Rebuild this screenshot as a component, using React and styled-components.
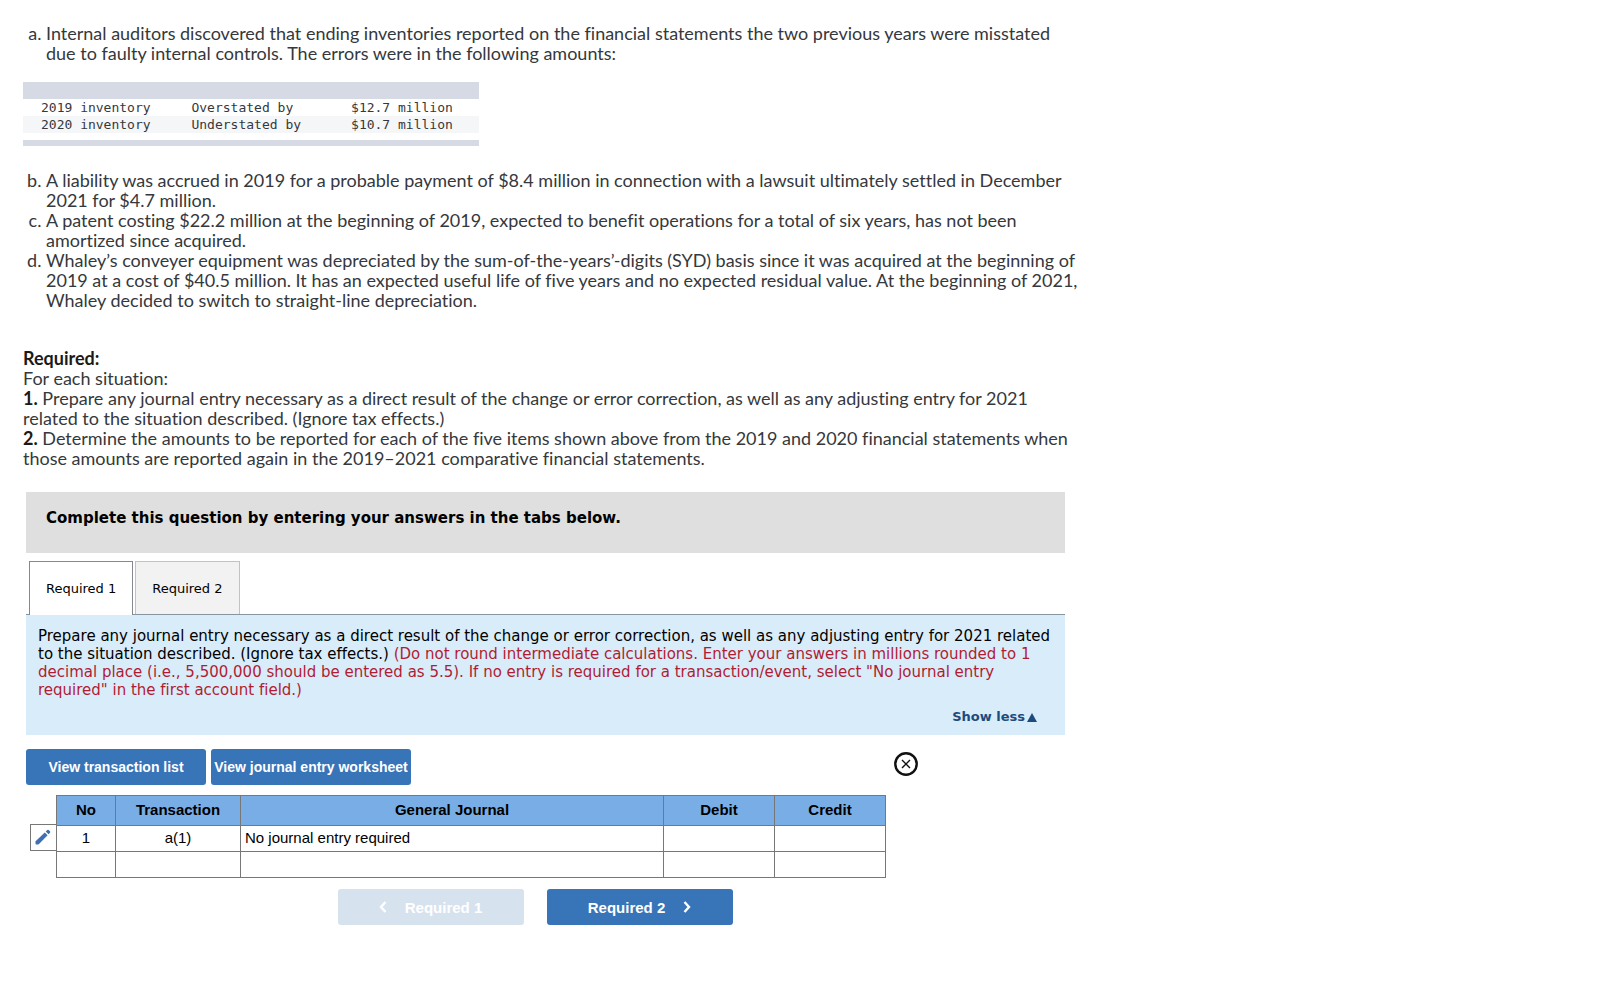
import React from 'react';
import styled, { createGlobalStyle } from 'styled-components';

const GlobalStyle = createGlobalStyle`
    body {
        margin: 0;
        background: white;
        color: #35383c;
        font-family: Lato, sans-serif;
        font-size: 18px;
        font-variant-ligatures: none;
        line-height: 20px;
    }
`

const StyledPage = styled.main`
    max-width: 1060px;
    padding: 23px;
`

const StyledList = styled.ol`
    list-style-type: lower-alpha;
    margin: 0;
    padding-left: 23px;
`

const StyledInventory = styled.table`
    width: 100%;
    max-width: 456px;
    margin: 19px 0 24px;
    border-collapse: collapse;
    border-top: 17px solid #d6dae4;
    border-bottom: 6px solid #d6dae4;
    font-family: 'DejaVu Sans Mono', monospace;
    font-size: 13px;
    line-height: 17px;

    td {
        width: 33%;
        padding: 0 0 0 18px;
        white-space: nowrap;
    }

    td:nth-child(2) {
        width: 35%;
    }

    tr:nth-child(2) {
        background: #f5f6f7;
    }

    tr:last-child td {
        height: 7px;
    }
`

const StyledRequired = styled.section`
    margin: 38px 0 24px;

    p {
        margin: 0;
    }

    b {
        color: #1a1a1a;
    }
`

const StyledQuestion = styled.section`
    max-width: 1039px;
    margin-left: 3px;
    color: black;
    font-family: 'DejaVu Sans', sans-serif;
    font-size: 15px;
    line-height: 18px;
`

const StyledBanner = styled.div`
    padding: 17px 20px 26px;
    background: #dfdfdf;
    font-weight: bold;
`

const StyledTabs = styled.div`
    display: flex;
    gap: 2px;
    margin-top: 8px;
    padding: 0 3px;
    border-bottom: 1px solid #8795a1;
`

const StyledTab = styled.button`
    height: ${props => props.$active ? '54px' : '53px'};
    margin-bottom: ${props => props.$active ? '-1px' : '0'};
    padding: 0 16px;
    border: 1px solid ${props => props.$active ? '#85898f' : '#c2c2c2'};
    border-bottom: 0;
    background: ${props => props.$active ? 'white' : '#f2f2f2'};
    color: black;
    font-family: inherit;
    font-size: 13px;
`

const StyledInstructions = styled.div`
    display: flex;
    flex-direction: column;
    padding: 12px 12px 10px;
    background: #d9ecf9;

    p {
        margin: 0;
    }
`

const StyledNote = styled.span`
    color: #b01c33;
`

const StyledShowLess = styled.button`
    display: flex;
    align-items: center;
    align-self: flex-end;
    gap: 2px;
    height: 18px;
    margin: 8px 16px 0 0;
    padding: 0;
    border: 0;
    background: none;
    color: #1d4b7c;
    font-family: inherit;
    font-size: 13px;
    font-weight: bold;
`

const StyledJournal = styled.div`
    max-width: 892px;
    margin-top: 14px;
    font-family: 'Liberation Sans', sans-serif;
`

const StyledToolbar = styled.div`
    display: flex;
    gap: 5px;
    margin-bottom: 10px;
`

const StyledButton = styled.button`
    display: flex;
    align-items: center;
    justify-content: center;
    gap: 18px;
    width: ${props => props.$width};
    height: 36px;
    padding: 0;
    border: 0;
    border-radius: 3px;
    background: #3874b8;
    color: white;
    font-family: 'Liberation Sans', sans-serif;
    font-size: ${props => props.$large ? '15px' : '14px'};
    font-weight: bold;

    &:disabled {
        background: #d7e2ef;
    }
`

const StyledClose = styled.button`
    display: flex;
    align-self: flex-start;
    margin: 3px 0 0 auto;
    padding: 0;
    border: 0;
    background: none;
`

const StyledSheet = styled.div`
    display: flex;
    align-items: flex-start;
    padding-left: 4px;
`

const StyledEdit = styled.button`
    display: flex;
    align-items: center;
    justify-content: center;
    width: 26px;
    height: 27px;
    margin-top: 29px;
    padding: 0 2px 2px 0;
    border: 1px solid #777;
    border-right: 0;
    background: white;
`

const StyledTable = styled.table`
    width: 100%;
    max-width: 830px;
    table-layout: fixed;
    border-collapse: collapse;
    text-align: center;

    th, td {
        height: 23px;
        padding: 0 4px 2px;
        border: 1px solid #777;
    }

    th {
        height: 27px;
        background: #79ade6;
    }

    td:nth-child(3) {
        text-align: left;
    }
`

const StyledColumn = styled.col`
    width: ${props => props.$width};
`

const StyledNav = styled.nav`
    display: flex;
    justify-content: center;
    gap: 23px;
    margin-top: 11px;
    padding-right: 21px;
`

const Chevron = ({ d }) => (
    <svg width='8' height='12' viewBox='0 0 8 12' fill='none' stroke='currentColor' strokeWidth='2.4' aria-hidden='true'>
        <path d={d} />
    </svg>
)

const inventories = [
    ['2019 inventory', 'Overstated by', '$12.7 million'],
    ['2020 inventory', 'Understated by', '$10.7 million']
];

const columns = [
    { name: 'No', width: '59px' },
    { name: 'Transaction', width: '125px' },
    { name: 'General Journal', width: 'auto' },
    { name: 'Debit', width: '111px' },
    { name: 'Credit', width: '111px' }
];

const entries = [
    ['1', 'a(1)', 'No journal entry required', '', ''],
    ['', '', '', '', '']
];

const tabs = ['Required 1', 'Required 2'];

class App extends React.Component{
    state = {
        tab: 'Required 1'
    }

    selectTab = (e) => {
        this.setState({tab: e.currentTarget.name});
    }

    render(){
        return(
            <StyledPage>
                <GlobalStyle />
                <StyledList>
                    <li>
                        Internal auditors discovered that ending inventories reported on the financial statements the two previous years were misstated<br />
                        due to faulty internal controls. The errors were in the following amounts:
                    </li>
                </StyledList>
                <StyledInventory>
                    <tbody>
                        {inventories.map(row => (
                            <tr key={row[0]}>
                                {row.map(cell => <td key={cell}>{cell}</td>)}
                            </tr>
                        ))}
                        <tr><td colSpan='3'></td></tr>
                    </tbody>
                </StyledInventory>
                <StyledList start='2'>
                    <li>
                        A liability was accrued in 2019 for a probable payment of $8.4 million in connection with a lawsuit ultimately settled in December<br />
                        2021 for $4.7 million.
                    </li>
                    <li>
                        A patent costing $22.2 million at the beginning of 2019, expected to benefit operations for a total of six years, has not been<br />
                        amortized since acquired.
                    </li>
                    <li>
                        Whaley’s conveyer equipment was depreciated by the sum-of-the-years’-digits (SYD) basis since it was acquired at the beginning of<br />
                        2019 at a cost of $40.5 million. It has an expected useful life of five years and no expected residual value. At the beginning of 2021,<br />
                        Whaley decided to switch to straight-line depreciation.
                    </li>
                </StyledList>
                <StyledRequired>
                    <p><b>Required:</b></p>
                    <p>For each situation:</p>
                    <p>
                        <b>1.</b> Prepare any journal entry necessary as a direct result of the change or error correction, as well as any adjusting entry for 2021<br />
                        related to the situation described. (Ignore tax effects.)
                    </p>
                    <p>
                        <b>2.</b> Determine the amounts to be reported for each of the five items shown above from the 2019 and 2020 financial statements when<br />
                        those amounts are reported again in the 2019–2021 comparative financial statements.
                    </p>
                </StyledRequired>
                <StyledQuestion>
                    <StyledBanner>Complete this question by entering your answers in the tabs below.</StyledBanner>
                    <StyledTabs role='tablist'>
                        {tabs.map(tab => (
                            <StyledTab key={tab} type='button' role='tab' name={tab} aria-selected={tab === this.state.tab} $active={tab === this.state.tab} onClick={this.selectTab}>{tab}</StyledTab>
                        ))}
                    </StyledTabs>
                    <StyledInstructions>
                        <p>
                            Prepare any journal entry necessary as a direct result of the change or error correction, as well as any adjusting entry for 2021 related<br />
                            to the situation described. (Ignore tax effects.) <StyledNote>(Do not round intermediate calculations. Enter your answers in millions rounded to 1<br />
                            decimal place (i.e., 5,500,000 should be entered as 5.5). If no entry is required for a transaction/event, select "No journal entry<br />
                            required" in the first account field.)</StyledNote>
                        </p>
                        <StyledShowLess type='button'>
                            Show less
                            <svg width='10' height='12' viewBox='0 0 10 12' fill='currentColor' aria-hidden='true'>
                                <path d='M5 3L10 12H0Z' />
                            </svg>
                        </StyledShowLess>
                    </StyledInstructions>
                    <StyledJournal>
                        <StyledToolbar>
                            <StyledButton type='button' $width='180px'>View transaction list</StyledButton>
                            <StyledButton type='button' $width='200px'>View journal entry worksheet</StyledButton>
                            <StyledClose type='button' aria-label='Close'>
                                <svg width='24' height='24' viewBox='0 0 24 24' fill='none' stroke='#111' aria-hidden='true'>
                                    <circle cx='12' cy='12' r='10.7' strokeWidth='2.4' />
                                    <path d='M8 8L16 16M16 8L8 16' strokeWidth='1.4' />
                                </svg>
                            </StyledClose>
                        </StyledToolbar>
                        <StyledSheet>
                            <StyledEdit type='button' aria-label='Edit entry 1'>
                                <svg width='16' height='16' viewBox='0 0 16 16' fill='#3f6fae' aria-hidden='true'>
                                    <path d='M0.5 14.6V12.6Q0.5 12.2 0.8 11.9L9.8 3.4L12.6 6.2L4 15.1Q3.6 15.5 3.2 15.5H1.4Q0.5 15.5 0.5 14.6Z' />
                                    <path d='M10.7 2.5L12.3 1Q13 0.4 13.7 1L15 2.3Q15.7 3 15 3.7L13.5 5.3Z' />
                                </svg>
                            </StyledEdit>
                            <StyledTable>
                                <colgroup>
                                    {columns.map(column => <StyledColumn key={column.name} $width={column.width} />)}
                                </colgroup>
                                <thead>
                                    <tr>
                                        {columns.map(column => <th key={column.name} scope='col'>{column.name}</th>)}
                                    </tr>
                                </thead>
                                <tbody>
                                    {entries.map((entry, i) => (
                                        <tr key={i}>
                                            {entry.map((cell, j) => <td key={j}>{cell}</td>)}
                                        </tr>
                                    ))}
                                </tbody>
                            </StyledTable>
                        </StyledSheet>
                    </StyledJournal>
                    <StyledNav>
                        <StyledButton type='button' $width='186px' $large disabled>
                            <Chevron d='M6.5 1L2 6L6.5 11' />
                            Required 1
                        </StyledButton>
                        <StyledButton type='button' name='Required 2' $width='186px' $large onClick={this.selectTab}>
                            Required 2
                            <Chevron d='M1.5 1L6 6L1.5 11' />
                        </StyledButton>
                    </StyledNav>
                </StyledQuestion>
            </StyledPage>
        )
    }
}

export default App;
